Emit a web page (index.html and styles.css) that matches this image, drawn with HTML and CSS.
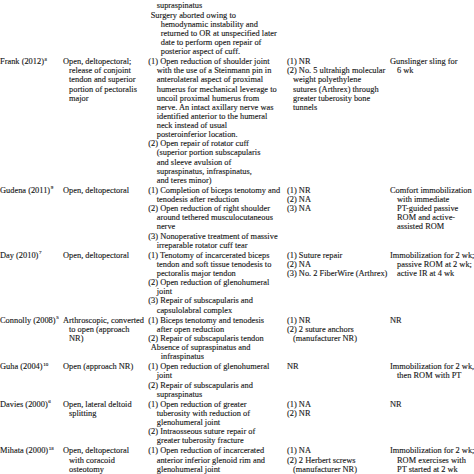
FILE: index.html
```html
<!DOCTYPE html>
<html>
<head>
<meta charset="utf-8">
<link rel="stylesheet" href="styles.css">
</head>
<body>
<div class="table">
  <div class="row first">
    <div class="c1"></div>
    <div class="c2"></div>
    <div class="c3">
      <div class="e cont">supraspinatus</div>
      <div class="e plain">Surgery aborted owing to<br>hemodynamic instability and<br>returned to OR at unspecified later<br>date to perform open repair of<br>posterior aspect of cuff.</div>
    </div>
    <div class="c4"></div>
    <div class="c5"></div>
  </div>

  <div class="row">
    <div class="c1">Frank (2012)<sup>8</sup></div>
    <div class="c2"><div class="e">Open, deltopectoral;<br>release of conjoint<br>tendon and superior<br>portion of pectoralis<br>major</div></div>
    <div class="c3">
      <div class="e">(1) Open reduction of shoulder joint<br>with the use of a Steinmann pin in<br>anterolateral aspect of proximal<br>humerus for mechanical leverage to<br>uncoil proximal humerus from<br>nerve. An intact axillary nerve was<br>identified anterior to the humeral<br>neck instead of usual<br>posteroinferior location.</div>
      <div class="e">(2) Open repair of rotator cuff<br>(superior portion subscapularis<br>and sleeve avulsion of<br>supraspinatus, infraspinatus,<br>and teres minor)</div>
    </div>
    <div class="c4">
      <div class="e">(1) NR</div>
      <div class="e">(2) No. 5 ultrahigh molecular<br>weight polyethylene<br>sutures (Arthrex) through<br>greater tuberosity bone<br>tunnels</div>
    </div>
    <div class="c5"><div class="e">Gunslinger sling for<br>6 wk</div></div>
  </div>

  <div class="row">
    <div class="c1">Gudena (2011)<sup>9</sup></div>
    <div class="c2"><div class="e">Open, deltopectoral</div></div>
    <div class="c3">
      <div class="e">(1) Completion of biceps tenotomy and<br>tenodesis after reduction</div>
      <div class="e">(2) Open reduction of right shoulder<br>around tethered musculocutaneous<br>nerve</div>
      <div class="e">(3) Nonoperative treatment of massive<br>irreparable rotator cuff tear</div>
    </div>
    <div class="c4">
      <div class="e">(1) NR</div>
      <div class="e">(2) NA</div>
      <div class="e">(3) NA</div>
    </div>
    <div class="c5"><div class="e">Comfort immobilization<br>with immediate<br>PT-guided passive<br>ROM and active-<br>assisted ROM</div></div>
  </div>

  <div class="row">
    <div class="c1">Day (2010)<sup>7</sup></div>
    <div class="c2"><div class="e">Open, deltopectoral</div></div>
    <div class="c3">
      <div class="e">(1) Tenotomy of incarcerated biceps<br>tendon and soft tissue tenodesis to<br>pectoralis major tendon</div>
      <div class="e">(2) Open reduction of glenohumeral<br>joint</div>
      <div class="e">(3) Repair of subscapularis and<br>capsulolabral complex</div>
    </div>
    <div class="c4">
      <div class="e">(1) Suture repair</div>
      <div class="e">(2) NA</div>
      <div class="e">(3) No. 2 FiberWire (Arthrex)</div>
    </div>
    <div class="c5"><div class="e">Immobilization for 2 wk;<br>passive ROM at 2 wk;<br>active IR at 4 wk</div></div>
  </div>

  <div class="row">
    <div class="c1">Connolly (2008)<sup>5</sup></div>
    <div class="c2"><div class="e">Arthroscopic, converted<br>to open (approach<br>NR)</div></div>
    <div class="c3">
      <div class="e">(1) Biceps tenotomy and tenodesis<br>after open reduction</div>
      <div class="e">(2) Repair of subscapularis tendon</div>
      <div class="e plain">Absence of supraspinatus and<br>infraspinatus</div>
    </div>
    <div class="c4">
      <div class="e">(1) NR</div>
      <div class="e">(2) 2 suture anchors<br>(manufacturer NR)</div>
    </div>
    <div class="c5"><div class="e">NR</div></div>
  </div>

  <div class="row">
    <div class="c1">Guha (2004)<sup>10</sup></div>
    <div class="c2"><div class="e">Open (approach NR)</div></div>
    <div class="c3">
      <div class="e">(1) Open reduction of glenohumeral<br>joint</div>
      <div class="e">(2) Repair of subscapularis and<br>supraspinatus</div>
    </div>
    <div class="c4"><div class="e">NR</div></div>
    <div class="c5"><div class="e">Immobilization for 2 wk,<br>then ROM with PT</div></div>
  </div>

  <div class="row">
    <div class="c1">Davies (2000)<sup>6</sup></div>
    <div class="c2"><div class="e">Open, lateral deltoid<br>splitting</div></div>
    <div class="c3">
      <div class="e">(1) Open reduction of greater<br>tuberosity with reduction of<br>glenohumeral joint</div>
      <div class="e">(2) Intraosseous suture repair of<br>greater tuberosity fracture</div>
    </div>
    <div class="c4">
      <div class="e">(1) NA</div>
      <div class="e">(2) NR</div>
    </div>
    <div class="c5"><div class="e">NR</div></div>
  </div>

  <div class="row">
    <div class="c1">Mihata (2000)<sup>18</sup></div>
    <div class="c2"><div class="e">Open, deltopectoral<br>with coracoid<br>osteotomy</div></div>
    <div class="c3">
      <div class="e">(1) Open reduction of incarcerated<br>anterior inferior glenoid rim and<br>glenohumeral joint</div>
      <div class="e">(2) Bony Bankart repair</div>
    </div>
    <div class="c4">
      <div class="e">(1) NA</div>
      <div class="e">(2) 2 Herbert screws<br>(manufacturer NR)</div>
      <div class="e">(3) NR</div>
    </div>
    <div class="c5"><div class="e">Immobilization for 2 wk;<br>ROM exercises with<br>PT started at 2 wk</div></div>
  </div>
</div>
</body>
</html>
```

FILE: styles.css
```css
html, body {
  margin: 0;
  padding: 0;
  background: #ffffff;
}
body {
  width: 474px;
  height: 474px;
  overflow: hidden;
  font-family: "Liberation Serif", "DejaVu Serif", serif;
  font-size: 8.4px;
  line-height: 9.12px;
  color: #161616;
  -webkit-text-stroke: 0.12px #161616;
}
.table {
  padding-top: 0.4px;
}
.row {
  display: grid;
  grid-template-columns: 63px 85px 139px 103px 1fr;
  margin-top: 1px;
}
.e {
  white-space: nowrap;
}
.c1 {
  white-space: nowrap;
}
.c2 .e {
  padding-left: 6px;
  text-indent: -6px;
}
.c3 {
  padding-left: 0.3px;
}
.c3 .e {
  padding-left: 8.4px;
  text-indent: -8.4px;
}
.c3 .e.plain {
  padding-left: 12.4px;
  text-indent: -10px;
}
.c3 .e.cont {
  padding-left: 8.4px;
  text-indent: 0;
}
.c4 .e {
  padding-left: 6px;
  text-indent: -6px;
}
.c5 .e {
  padding-left: 7px;
  text-indent: -7px;
}
sup {
  font-size: 5px;
  line-height: 0;
  vertical-align: 3.5px;
  margin-left: 0.6px;
}
```
